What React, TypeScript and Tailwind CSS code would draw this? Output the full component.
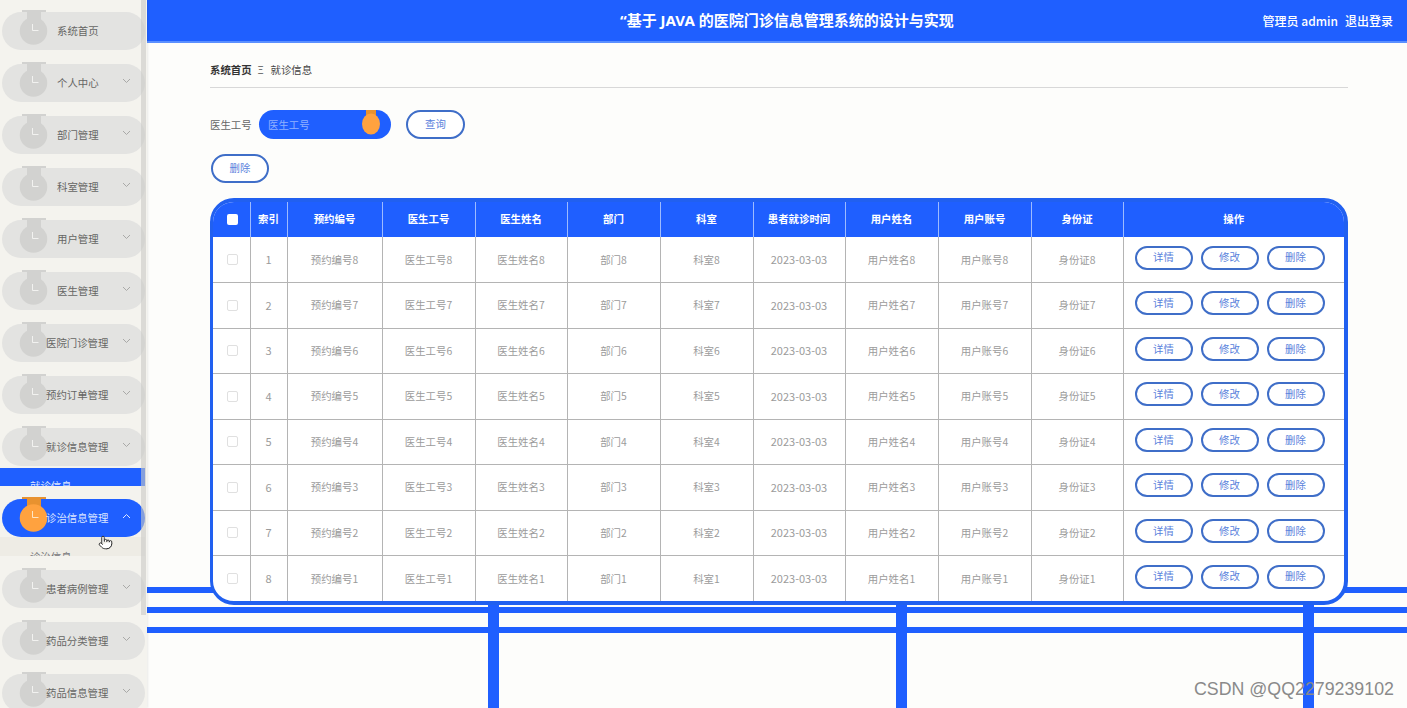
import React from "react";
import { Pointer } from "lucide-react";

const cjk = { fontFamily: '"Noto Sans CJK SC", "Noto Sans", sans-serif' };
const latinFirst = { fontFamily: '"Noto Sans", "Noto Sans CJK SC", sans-serif' };

function Bulb({ active }: { active?: boolean }) {
  const stem = active ? "#e8922f" : "#d2d2d0";
  const body = active ? "#ffa23f" : "#d2d2d0";
  const mark = active ? "#ffe6c4" : "#f2f2f0";
  return (
    <svg width="30" height="42" viewBox="0 0 30 42" className="absolute left-[17px] -top-[2px]">
      <rect x="3" y="0" width="24" height="2" fill={stem} />
      <rect x="8" y="0" width="14" height="14" fill={stem} />
      <circle cx="14.5" cy="21" r="13.75" fill={body} />
      <path d="M13.5 14V20.5H19.5" fill="none" stroke={mark} strokeWidth="1" />
    </svg>
  );
}

function Chevron({ up, light }: { up?: boolean; light?: boolean }) {
  return (
    <svg width="9" height="6" viewBox="0 0 9 6" className="absolute right-[14px] top-[14px]">
      <path d={up ? "M1 5L4.5 1.5L8 5" : "M1 1L4.5 4.5L8 1"} fill="none" stroke={light ? "#dfe8ff" : "#a9a9a7"} strokeWidth="1" />
    </svg>
  );
}

function NavPill({ label, wide, chevron = true, active }: { label: string; wide?: boolean; chevron?: boolean; active?: boolean }) {
  return (
    <div className={`relative h-[38px] w-[143px] ml-[2px] rounded-[19px] ${active ? "bg-[#1f5fff]" : "bg-[#e3e3e1]"}`}>
      <Bulb active={active} />
      <span
        className={`absolute top-[11px] text-[10.4px] leading-[16px] whitespace-nowrap ${wide ? "left-[44px]" : "left-[55px]"} ${active ? "text-[#dce6ff]" : "text-[#666664]"}`}
      >
        {label}
      </span>
      {chevron && <Chevron up={active} light={active} />}
    </div>
  );
}

const firstItems = [
  { label: "系统首页", chevron: false },
  { label: "个人中心" },
  { label: "部门管理" },
  { label: "科室管理" },
  { label: "用户管理" },
  { label: "医生管理" },
  { label: "医院门诊管理", wide: true },
  { label: "预约订单管理", wide: true },
  { label: "就诊信息管理", wide: true },
];

const lastItems = ["患者病例管理", "药品分类管理", "药品信息管理"];

function Sidebar() {
  return (
    <aside className="relative z-10 w-[147px] h-[708px] shrink-0 overflow-hidden bg-[#f4f3ee] pt-[12px] shadow-[1px_0_2px_rgba(0,0,0,0.08)]">
      <div className="flex flex-col gap-[14px]">
        {firstItems.map((it) => (
          <NavPill key={it.label} {...it} />
        ))}
      </div>
      <div className="mt-[2px] h-[18px] w-[145px] overflow-hidden bg-[#1f5fff] pl-[30px] pt-[10px] text-[10.4px] leading-[16px] text-[#dce6ff]">
        就诊信息
      </div>
      <div className="mt-[13px]">
        <NavPill label="诊治信息管理" wide active />
      </div>
      <div className="h-[19px] w-[145px] overflow-hidden bg-[#eeece5] pl-[30px] pt-[12px] text-[10.4px] leading-[16px] text-[#77777a]">
        诊治信息
      </div>
      <div className="mt-[14px] flex flex-col gap-[14px]">
        {lastItems.map((l) => (
          <NavPill key={l} label={l} wide />
        ))}
      </div>
      <div className="absolute left-[141px] top-0 h-[615px] w-[5px] bg-[#c9c9c6]/60" />
      <Pointer size={15} className="absolute left-[98px] top-[535px] text-[#222] fill-white" strokeWidth={1.5} />
    </aside>
  );
}

const headers = ["索引", "预约编号", "医生工号", "医生姓名", "部门", "科室", "患者就诊时间", "用户姓名", "用户账号", "身份证"];
const rows = [1, 2, 3, 4, 5, 6, 7, 8];

function OutlineBtn({ label, size = "h-[24px] w-[58px]" }: { label: string; size?: string }) {
  return (
    <button className={`${size} rounded-full border-2 border-[#3f6ec8] bg-white text-[10.4px] leading-none text-[#5a82dc]`} style={cjk}>
      {label}
    </button>
  );
}

function DataTable() {
  const widths = [37, 37, 95, 93, 92, 93, 93, 92, 93, 93, 92, 221];
  return (
    <div className="relative z-10 ml-[63px] mt-[15px] h-[407px] w-[1138px] overflow-hidden rounded-[24px] border-x-[3px] border-r-[4px] border-t-[4px] border-b-[4px] border-[#2160f0] bg-white">
      <table className="w-[1131px] table-fixed border-collapse text-center text-[10.4px]">
        <colgroup>
          {widths.map((w, i) => (
            <col key={i} className="" style={{ width: w }} />
          ))}
        </colgroup>
        <thead>
          <tr className="h-[35px] bg-[#1f5fff] font-bold text-white">
            <th className="border-r border-[#9dbbff] pl-[2px]">
              <span className="mx-auto block h-[11px] w-[11px] rounded-[2px] bg-white" />
            </th>
            {headers.map((h) => (
              <th key={h} className="border-r border-[#9dbbff] pb-[2px] font-bold">
                {h}
              </th>
            ))}
            <th className="pb-[2px] font-bold">操作</th>
          </tr>
        </thead>
        <tbody className="text-[#9b9b9b]">
          {rows.map((n) => {
            const k = 9 - n;
            return (
              <tr key={n} className="h-[45.5px] border-b border-[#b4b4b4] last:border-b-0">
                <td className="border-r border-[#b4b4b4] pl-[2px]">
                  <span className="mx-auto block h-[11px] w-[11px] rounded-[2px] border border-[#e0e0e0] bg-white" />
                </td>
                <td className="border-r border-[#b4b4b4] pb-px text-[11px]">{n}</td>
                <td className="border-r border-[#b4b4b4]">预约编号{k}</td>
                <td className="border-r border-[#b4b4b4]">医生工号{k}</td>
                <td className="border-r border-[#b4b4b4]">医生姓名{k}</td>
                <td className="border-r border-[#b4b4b4]">部门{k}</td>
                <td className="border-r border-[#b4b4b4]">科室{k}</td>
                <td className="border-r border-[#b4b4b4] pb-px text-[11px]">2023-03-03</td>
                <td className="border-r border-[#b4b4b4]">用户姓名{k}</td>
                <td className="border-r border-[#b4b4b4]">用户账号{k}</td>
                <td className="border-r border-[#b4b4b4]">身份证{k}</td>
                <td className="pb-[4px] pl-[11px]">
                  <div className="flex gap-2">
                    <OutlineBtn label="详情" />
                    <OutlineBtn label="修改" />
                    <OutlineBtn label="删除" />
                  </div>
                </td>
              </tr>
            );
          })}
        </tbody>
      </table>
    </div>
  );
}

export default function App() {
  return (
    <div className="flex h-[708px] w-[1407px] overflow-hidden bg-[#fdfdfb]" style={cjk}>
      <Sidebar />
      <main className="relative min-w-0 flex-1">
        <div className="absolute left-0 right-0 top-[587px] h-[6px] bg-[#1f5fff]" />
        <div className="absolute left-0 right-0 top-[607px] h-[6px] bg-[#1f5fff]" />
        <div className="absolute left-0 right-0 top-[627px] h-[6px] bg-[#1f5fff]" />
        <div className="absolute left-[341px] top-[600px] h-[108px] w-[11px] bg-[#1f5fff]" />
        <div className="absolute left-[749px] top-[600px] h-[108px] w-[11px] bg-[#1f5fff]" />
        <div className="absolute left-[1156px] top-[600px] h-[108px] w-[11px] bg-[#1f5fff]" />

        <header className="relative flex h-[43px] items-center border-b-2 border-[#5b90ff] bg-[#1f5fff] text-white">
          <h1 className="ml-[473px] text-[15px] font-bold leading-none whitespace-nowrap" style={latinFirst}>“基于 JAVA 的医院门诊信息管理系统的设计与实现</h1>
          <div className="ml-auto mr-[14px] flex gap-[7px] text-[12px] font-medium whitespace-nowrap">
            <span>管理员 admin</span>
            <span>退出登录</span>
          </div>
        </header>

        <div className="relative ml-[63px] mr-[59px] mt-[16px] flex h-[29px] items-center border-b border-[#d8d8d8] pb-[6px] text-[10.4px] leading-none">
          <span className="font-bold text-[#333]">系统首页</span>
          <span className="ml-[5px] w-[8px] text-center text-[#555]">Ξ</span>
          <span className="ml-[6px] text-[#444]">就诊信息</span>
        </div>

        <div className="relative ml-[63px] mt-[22px] flex h-[29px] items-center text-[10.4px]">
          <span className="w-[49px] text-[#666]">医生工号</span>
          <div className="relative flex h-[29px] w-[132px] items-center rounded-full bg-[#1f5fff] pl-[9px] text-[#8fb0ff]">
            医生工号
            <svg width="20" height="25" viewBox="0 0 20 25" className="absolute left-[102px] top-0">
              <rect x="5" y="0" width="10" height="6" fill="#e8922f" />
              <ellipse cx="10" cy="14" rx="9" ry="10.5" fill="#ffa23f" />
            </svg>
          </div>
          <div className="ml-[15px]">
            <OutlineBtn label="查询" size="h-[29px] w-[59px]" />
          </div>
        </div>

        <div className="relative ml-[64px] mt-[15px]">
          <OutlineBtn label="删除" size="h-[29px] w-[58px] block" />
        </div>

        <DataTable />

        <div className="absolute left-[1047px] top-[679px] z-20 whitespace-nowrap text-[17.8px] leading-[20px] text-[#8a8a8a]" style={{ fontFamily: '"Liberation Sans", sans-serif' }}>
          CSDN @QQ2279239102
        </div>
      </main>
    </div>
  );
}
